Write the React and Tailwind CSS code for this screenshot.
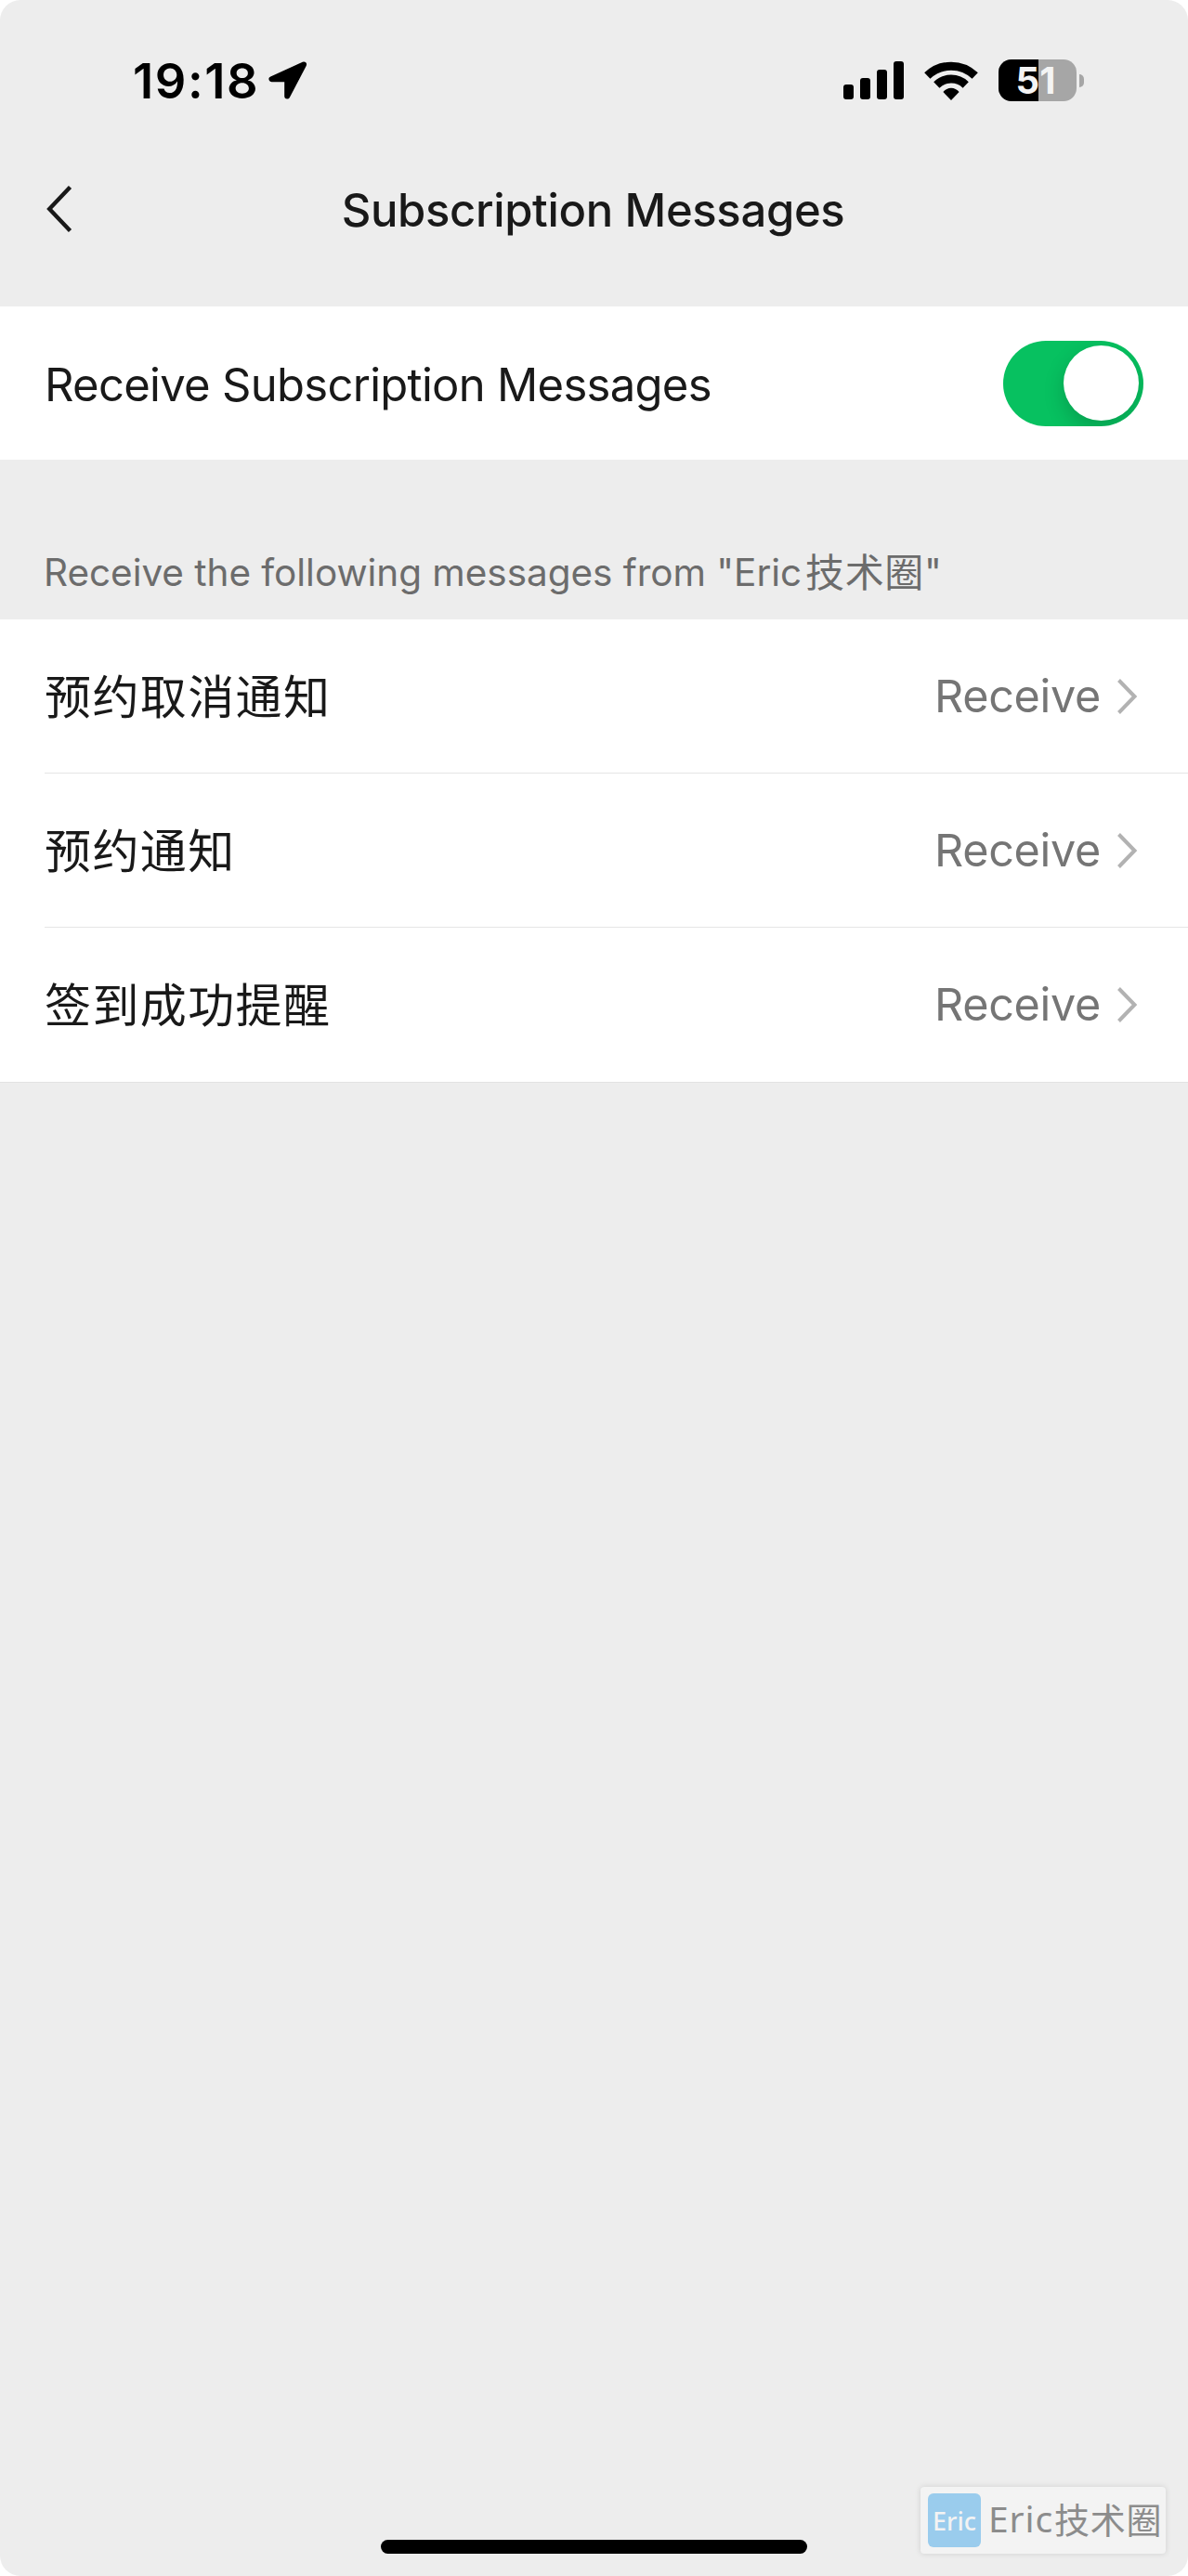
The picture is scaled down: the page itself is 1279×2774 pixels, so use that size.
import { useState } from 'react'

const SUBSCRIPTIONS = [
  { id: 'cancel', title: '预约取消通知', status: 'Receive' },
  { id: 'booking', title: '预约通知', status: 'Receive' },
  { id: 'checkin', title: '签到成功提醒', status: 'Receive' },
]

function LocationIcon() {
  return (
    <svg width="44" height="44" viewBox="0 0 44 44" aria-hidden="true">
      <path
        d="M39 4.5 L4.5 20.2 H21.2 V38.5 Z"
        fill="#000"
        stroke="#000"
        strokeWidth="6"
        strokeLinejoin="round"
      />
    </svg>
  )
}

function SignalIcon() {
  return (
    <svg width="65" height="41" viewBox="0 0 65 41" aria-hidden="true">
      <rect x="0" y="25" width="11" height="16" rx="3" />
      <rect x="18" y="18" width="11" height="23" rx="3" />
      <rect x="36" y="9" width="11" height="32" rx="3" />
      <rect x="54" y="0" width="11" height="41" rx="3" />
    </svg>
  )
}

function WifiIcon() {
  return (
    <svg width="58" height="42" viewBox="0 0 58 42" aria-hidden="true">
      <g fill="none" stroke="#000">
        <path d="M3.3 15.6 A37 37 0 0 1 54.7 15.6" strokeWidth="9" />
        <path d="M13.3 25.4 A22.6 22.6 0 0 1 44.7 25.4" strokeWidth="9" />
      </g>
      <path d="M29 42 L20.4 33 A11 11 0 0 1 37.6 33 Z" />
    </svg>
  )
}

function Battery({ level }) {
  return (
    <div className="flex items-center gap-[3px]">
      <div className="relative flex h-[45px] w-[84px] items-center justify-center">
        <div className="absolute inset-0 overflow-hidden rounded-[14px] bg-[#a6a6a6]">
          <div className="h-full bg-black" style={{ width: `${level}%` }} />
        </div>
        <span className="relative pr-1 text-[40px] leading-none font-bold text-[#f4f4f4]">{level}</span>
      </div>
      <div className="h-[14px] w-[5px] rounded-r-full bg-[#a6a6a6]" />
    </div>
  )
}

function StatusBar() {
  return (
    <div className="flex h-[173px] items-center justify-between pr-[112px] pl-[143px] text-black">
      <div className="flex items-center">
        <span className="w-[145px] pt-px text-[52.5px] leading-none font-semibold tracking-[1.6px]">19:18</span>
        <LocationIcon />
      </div>
      <div className="flex items-center">
        <SignalIcon />
        <div className="mx-[22px]">
          <WifiIcon />
        </div>
        <Battery level={51} />
      </div>
    </div>
  )
}

function Toggle({ on, onChange }) {
  return (
    <button
      role="switch"
      aria-checked={on}
      aria-label="Receive Subscription Messages"
      onClick={() => onChange(!on)}
      className={`flex h-[92px] w-[151px] items-center overflow-hidden rounded-full px-[5.5px] ${
        on ? 'justify-end bg-[#07c160]' : 'justify-start bg-[#d9d9d9]'
      }`}
    >
      <span className="size-[81px] rounded-full bg-white shadow-[0_9px_22px_rgba(0,0,0,0.18)]" />
    </button>
  )
}

function SubscriptionRow({ title, status, last }) {
  return (
    <button className="block w-full pl-12 text-left">
      <div
        className={`flex h-[166px] items-center justify-between border-b pr-[54px] ${
          last ? 'border-white' : 'border-[#e5e5e5]'
        }`}
      >
        <span className="-mt-[5px] font-['Noto_Sans_CJK_SC',sans-serif] text-[50px] leading-none tracking-[1.4px]">
          {title}
        </span>
        <span className="flex items-center gap-[18px]">
          <span className="pt-px text-[48.5px] leading-none tracking-[-0.3px] text-[#757575]">{status}</span>
          <svg width="22" height="38" viewBox="0 0 22 38" fill="none" aria-hidden="true">
            <path d="M1.5 1.5 L18.5 19 L1.5 36.5" stroke="#b2b2b2" strokeWidth="4" />
          </svg>
        </span>
      </div>
    </button>
  )
}

function Watermark() {
  return (
    <div className="absolute right-6 bottom-6 flex h-[72px] w-[264px] items-center rounded bg-[#f3f3f3] pl-2 shadow-[0_0_6px_rgba(0,0,0,0.13)]">
      <div className="flex h-[58px] w-[57px] items-center justify-center rounded-[6px] bg-[#9acced] font-['Noto_Sans',sans-serif] text-[27px] leading-none font-medium text-[#f3f3f3]">
        Eric
      </div>
      <div className="mb-[5px] ml-2 flex items-center leading-none whitespace-nowrap text-[#8c8c8c]">
        <span className="w-[71px] font-['Noto_Sans',sans-serif] text-[39px] tracking-[0.9px]">Eric</span>
        <span className="font-['Noto_Sans_CJK_SC',sans-serif] text-[38px] tracking-[0.8px]">技术圈</span>
      </div>
    </div>
  )
}

export default function App() {
  const [enabled, setEnabled] = useState(true)

  return (
    <div className="h-[2774px] w-[1279px] bg-white">
      <div className="relative flex h-full flex-col overflow-hidden rounded-[22px] bg-[#ededed] font-['Inter','Noto_Sans_CJK_SC',sans-serif] text-[#191919]">
        <StatusBar />

        {/* Navigation bar */}
        <div className="grid h-[157px] grid-cols-[200px_1fr_200px] items-start">
          <button className="pt-[27px] pl-[50px]" aria-label="Back">
            <svg width="28" height="50" viewBox="0 0 28 50" fill="none">
              <path d="M25.5 1.5 L3.2 25 L25.5 48.5" stroke="#191919" strokeWidth="4.4" />
            </svg>
          </button>
          <h1 className="pt-[29px] pr-[2px] text-center text-[49px] leading-none font-medium tracking-[-0.35px]">
            Subscription Messages
          </h1>
        </div>

        <div className="flex h-[165px] items-center justify-between bg-white pr-12 pl-12">
          <span className="pt-[3px] text-[49px] leading-none tracking-[-0.72px]">Receive Subscription Messages</span>
          <Toggle on={enabled} onChange={setEnabled} />
        </div>

        <div className="flex h-[172px] items-end pb-[30px] pl-[47px] text-[40.5px] leading-none text-[#6c6c6c]">
          <span className="tracking-[-0.04px] whitespace-pre">Receive the following messages from "Eric</span>
          <span className="mb-[2px] ml-[4px] font-['Noto_Sans_CJK_SC',sans-serif] text-[42px] tracking-[0.6px]">
            技术圈
          </span>
          <span>"</span>
        </div>

        <div className="border-b border-[#e2e2e2] bg-white">
          {SUBSCRIPTIONS.map((item, i) => (
            <SubscriptionRow
              key={item.id}
              title={item.title}
              status={item.status}
              last={i === SUBSCRIPTIONS.length - 1}
            />
          ))}
        </div>

        {/* Home indicator */}
        <div className="mx-auto mt-auto mb-6 h-[15px] w-[459px] shrink-0 rounded-full bg-black" />

        <Watermark />
      </div>
    </div>
  )
}
